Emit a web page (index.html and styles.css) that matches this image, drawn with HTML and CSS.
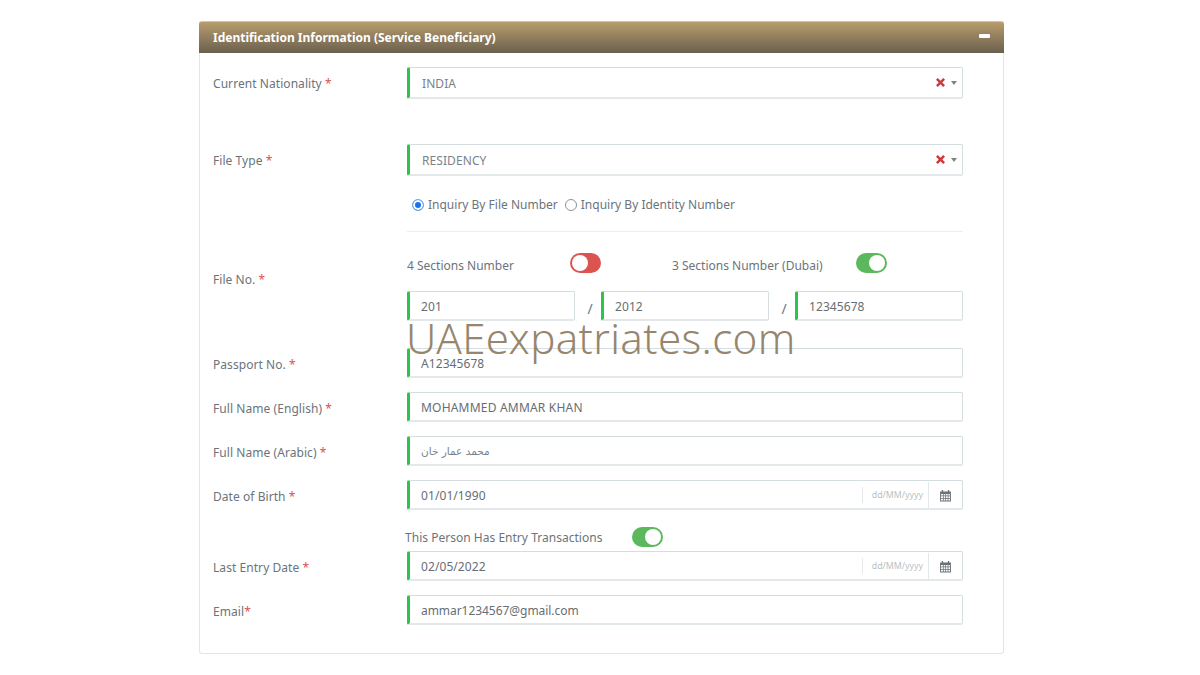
FILE: index.html
```html
<!DOCTYPE html>
<html lang="en">
<head>
<meta charset="utf-8">
<title>Identification Information</title>
<link rel="stylesheet" href="styles.css">
</head>
<body>
<section class="panel">
  <header class="panel-head">
    <h2 class="panel-title">Identification Information (Service Beneficiary)</h2>
    <span class="collapse"></span>
  </header>
  <div class="panel-body">
    <div class="row row-nationality">
      <div class="label">Current Nationality <span class="req">*</span></div>
      <div class="field field-select"><span class="value value-select">INDIA</span>
        <svg class="clear" viewBox="1 1 8 8"><path d="M1 2.6 2.6 1 5 3.4 7.4 1 9 2.6 6.6 5 9 7.4 7.4 9 5 6.6 2.6 9 1 7.4 3.4 5z"/></svg><span class="caret"></span></div>
    </div>
    <div class="row row-filetype">
      <div class="label">File Type <span class="req">*</span></div>
      <div class="field field-select"><span class="value value-select">RESIDENCY</span>
        <svg class="clear" viewBox="1 1 8 8"><path d="M1 2.6 2.6 1 5 3.4 7.4 1 9 2.6 6.6 5 9 7.4 7.4 9 5 6.6 2.6 9 1 7.4 3.4 5z"/></svg><span class="caret"></span></div>
    </div>
    <div class="row row-radio">
      <div class="label"></div>
      <div class="radios">
        <span class="radio radio-on"></span><span class="radio-text">Inquiry By File Number</span>
        <span class="radio"></span><span class="radio-text">Inquiry By Identity Number</span>
      </div>
    </div>
    <div class="row row-divider"><div class="label"></div><div class="divider"></div></div>
    <div class="row row-fileno">
      <div class="label">File No. <span class="req">*</span></div>
      <div class="fileno">
        <div class="toggles">
          <span class="toggle-label toggle-label-a">4 Sections Number</span>
          <span class="toggle toggle-off"><span class="knob"></span></span>
          <span class="toggle-label toggle-label-b">3 Sections Number (Dubai)</span>
          <span class="toggle toggle-on"><span class="knob"></span></span>
        </div>
        <div class="parts">
          <div class="field part"><span class="value">201</span></div>
          <span class="slash">/</span>
          <div class="field part"><span class="value">2012</span></div>
          <span class="slash">/</span>
          <div class="field part part-last"><span class="value">12345678</span></div>
        </div>
      </div>
    </div>
    <div class="row row-passport">
      <div class="label">Passport No. <span class="req">*</span></div>
      <div class="field"><span class="value">A12345678</span></div>
    </div>
    <div class="row row-next">
      <div class="label">Full Name (English) <span class="req">*</span></div>
      <div class="field"><span class="value value-name">MOHAMMED AMMAR KHAN</span></div>
    </div>
    <div class="row row-next">
      <div class="label">Full Name (Arabic) <span class="req">*</span></div>
      <div class="field"><span class="value value-ar" lang="ar" dir="rtl">محمد عمار خان</span></div>
    </div>
    <div class="row row-next">
      <div class="label">Date of Birth <span class="req">*</span></div>
      <div class="field field-date"><span class="value">01/01/1990</span><span class="date-hint">dd/MM/yyyy</span>
        <span class="date-btn"><svg class="cal" viewBox="0 0 12 12"><path d="M1 2.2h1.6V1h1.2v1.2h4.4V1h1.2v1.2H11V11.5H1zM1.9 4.6v1.4h1.7V4.6zm2.4 0v1.4h1.5V4.6zm2.2 0v1.4H8V4.6zm2.2 0v1.4h1.4V4.6zM1.9 6.7v1.5h1.7V6.7zm2.4 0v1.5h1.5V6.7zm2.2 0v1.5H8V6.7zm2.2 0v1.5h1.4V6.7zM1.9 8.9v1.7h1.7V8.9zm2.4 0v1.7h1.5V8.9zm2.2 0v1.7H8V8.9zm2.2 0v1.7h1.4V8.9z" fill-rule="evenodd"/></svg></span></div>
    </div>
    <div class="entry-row">
      <span class="entry-text">This Person Has Entry Transactions</span>
      <span class="toggle toggle-on"><span class="knob"></span></span>
    </div>
    <div class="row">
      <div class="label">Last Entry Date <span class="req">*</span></div>
      <div class="field field-date"><span class="value">02/05/2022</span><span class="date-hint">dd/MM/yyyy</span>
        <span class="date-btn"><svg class="cal" viewBox="0 0 12 12"><path d="M1 2.2h1.6V1h1.2v1.2h4.4V1h1.2v1.2H11V11.5H1zM1.9 4.6v1.4h1.7V4.6zm2.4 0v1.4h1.5V4.6zm2.2 0v1.4H8V4.6zm2.2 0v1.4h1.4V4.6zM1.9 6.7v1.5h1.7V6.7zm2.4 0v1.5h1.5V6.7zm2.2 0v1.5H8V6.7zm2.2 0v1.5h1.4V6.7zM1.9 8.9v1.7h1.7V8.9zm2.4 0v1.7h1.5V8.9zm2.2 0v1.7H8V8.9zm2.2 0v1.7h1.4V8.9z" fill-rule="evenodd"/></svg></span></div>
    </div>
    <div class="row row-next">
      <div class="label">Email<span class="req">*</span></div>
      <div class="field"><span class="value value-email">ammar1234567@gmail.com</span></div>
    </div>
  </div>
  <div class="watermark">UAEexpatriates.com</div>
</section>
</body>
</html>
```

FILE: styles.css
```css
* { box-sizing: border-box; }
html, body { margin: 0; padding: 0; background: #fff; }
body {
  width: 1200px;
  height: 675px;
  overflow: hidden;
  padding: 21px 0 0 199px;
  font-family: "Noto Sans", "DejaVu Sans", sans-serif;
  font-size: 12px;
  color: #6b747b;
}
.panel {
  position: relative;
  width: 805px;
  height: 633px;
  border: 1px solid #e2e6e8;
  border-top: 0;
  border-radius: 3px;
  background: #fff;
}
.panel-head {
  display: flex;
  align-items: center;
  justify-content: space-between;
  height: 32px;
  margin: 0 -1px;
  padding: 0 14px 1px 14px;
  border-radius: 3px 3px 0 0;
  border-top: 1px solid #cfc6b4;
  background: linear-gradient(#b89c6c, #6a604f);
}
.panel-title { margin: 0; font-size: 12px; font-weight: 700; color: #fff; }
.collapse { width: 11px; height: 4px; margin-bottom: 2px; border-radius: 1px; background: #fff; }
.panel-body { padding: 14px 0 0 13px; }
.row { display: flex; align-items: center; }
.row-filetype { margin-top: 45px; }
.row-radio { height: 29px; margin-top: 14px; }
.row-divider { margin-top: 12px; height: 1px; }
.row-fileno { margin-top: 5px; }
.row-passport { margin-top: 27px; }
.row-next { margin-top: 14px; }
.label { flex: 0 0 194px; padding-top: 2px; font-size: 12px; color: #6b747b; letter-spacing: .06px; }
.row-nationality .label, .row-filetype .label, .row-fileno .label { padding-top: 0; }
.req { color: #d9534f; }
.field {
  position: relative;
  display: flex;
  align-items: center;
  width: 556px;
  height: 30px;
  padding-top: 1px;
  border: 1px solid #d4dee0;
  border-bottom: 2px solid #e3e9ea;
  border-left: 3px solid #2ec24f;
  border-radius: 2px;
  background: #fff;
}
.field-select { height: 32px; }
.value { padding-left: 11px; font-size: 12px; color: #666e75; letter-spacing: .08px; }
.value-select { padding-left: 12px; color: #7a8289; }
.value-name { letter-spacing: .2px; }
.value-email { letter-spacing: -.05px; }
.value-ar { font-family: "DejaVu Sans", sans-serif; font-size: 10.5px; color: #7a8289; }
.clear { position: absolute; right: 17px; top: 10px; width: 9px; height: 9px; fill: #cf3a3a; }
.caret {
  position: absolute;
  right: 5px;
  top: 13px;
  border-left: 3.5px solid transparent;
  border-right: 3.5px solid transparent;
  border-top: 4px solid #7c8388;
}
.radios { display: flex; align-items: center; padding-left: 5px; }
.radio {
  width: 12px;
  height: 12px;
  border: 1px solid #8a9196;
  border-radius: 50%;
  background: #fff;
}
.radio-on { border: 1px solid #6ea8f0; background: #1a73e8; box-shadow: inset 0 0 0 2px #fff; }
.radio-text { margin: 0 7px 0 4px; font-size: 12px; color: #6b747b; }
.divider { width: 556px; height: 1px; background: #eceff0; }
.fileno { display: flex; flex-direction: column; width: 556px; }
.toggles { display: flex; align-items: center; height: 42px; padding-top: 10px; }
.toggle-label { padding-top: 4px; font-size: 12px; color: #6b747b; }
.toggle-label-a { width: 163px; }
.toggle-label-b { width: 184px; margin-left: 71px; }
.toggle {
  display: flex;
  flex: 0 0 31px;
  align-items: center;
  width: 31px;
  height: 20px;
  padding: 2px;
  border-radius: 10px;
}
.toggle-off { justify-content: flex-start; background: #dc5450; }
.toggle-on { justify-content: flex-end; background: #5cb85c; }
.knob { width: 16px; height: 16px; border-radius: 50%; background: #fff; }
.parts { display: flex; align-items: center; margin-top: 12px; }
.part { width: 168px; }
.part-last { flex: 1; }
.slash { width: 26px; margin-top: 6px; padding-left: 4px; text-align: center; font-size: 14px; line-height: 14px; color: #6b747b; }
.date-hint {
  margin-left: auto;
  padding: 2px 5px 2px 9px;
  border-left: 1px solid #e6e9ea;
  font-size: 8.8px;
  color: #b9bfc3;
}
.date-btn {
  display: flex;
  align-items: center;
  justify-content: center;
  width: 34px;
  height: 100%;
  border-left: 1px solid #e2e7e8;
}
.cal { width: 13px; height: 13px; fill: #6a7278; }
.entry-row { display: flex; align-items: center; height: 41px; padding: 13px 0 0 192px; }
.entry-text { width: 227px; font-size: 12px; color: #6b747b; letter-spacing: .02px; }
.watermark {
  position: absolute;
  left: 206px;
  top: 299px;
  font-family: "Noto Sans", sans-serif;
  font-size: 42px;
  font-weight: 300;
  line-height: 36px;
  letter-spacing: .39px;
  color: #96866c;
  white-space: nowrap;
}
```
